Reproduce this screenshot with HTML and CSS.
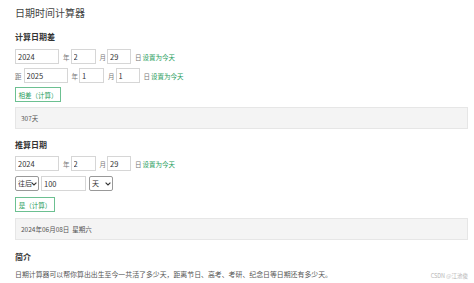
FILE: index.html
```html
<!DOCTYPE html>
<html lang="zh">
<head>
    <meta charset="UTF-8">
    <meta name="viewport" content="width=device-width, initial-scale=1.0">
    <title>日期时间计算器</title>
    <link rel="stylesheet" href="styles.css">
</head>
<body>
<div class="page">
    <h1 class="title">日期时间计算器</h1>

    <!-- 日期差 -->
    <h2 class="sec sec-first">计算日期差</h2>
    <div class="row">
        <input class="num year" type="text" value="2024">
        <span class="lbl">年</span>
        <input class="num mon" type="text" value="2">
        <span class="lbl">月</span>
        <input class="num day" type="text" value="29">
        <span class="lbl">日</span>
        <a class="today" href="#">设置为今天</a>
    </div>
    <div class="row">
        <span class="lbl lbl-start">距</span>
        <input class="num year" type="text" value="2025">
        <span class="lbl">年</span>
        <input class="num mon" type="text" value="1">
        <span class="lbl">月</span>
        <input class="num day" type="text" value="1">
        <span class="lbl">日</span>
        <a class="today" href="#">设置为今天</a>
    </div>
    <button class="calc calc-diff">相差（计算）</button>
    <div class="result">307天</div>

    <!-- 推算日期 -->
    <h2 class="sec sec-second">推算日期</h2>
    <div class="row">
        <input class="num year" type="text" value="2024">
        <span class="lbl">年</span>
        <input class="num mon" type="text" value="2">
        <span class="lbl">月</span>
        <input class="num day" type="text" value="29">
        <span class="lbl">日</span>
        <a class="today" href="#">设置为今天</a>
    </div>
    <div class="row row-shift">
        <div class="sel">
            <select><option>往后</option><option>往前</option></select>
            <svg class="chev" width="6" height="4" viewBox="0 0 6 4"><path d="M0.6 0.6 L3 3 L5.4 0.6" fill="none" stroke="#333" stroke-width="1.1"/></svg>
        </div>
        <input class="num count" type="text" value="100">
        <div class="sel">
            <select><option>天</option><option>周</option><option>月</option></select>
            <svg class="chev" width="6" height="4" viewBox="0 0 6 4"><path d="M0.6 0.6 L3 3 L5.4 0.6" fill="none" stroke="#333" stroke-width="1.1"/></svg>
        </div>
    </div>
    <button class="calc calc-go">是（计算）</button>
    <div class="result">2024年06月08日&nbsp;&nbsp;星期六</div>

    <!-- 简介 -->
    <h2 class="sec sec-intro">简介</h2>
    <p class="intro">日期计算器可以帮你算出出生至今一共活了多少天，距离节日、高考、考研、纪念日等日期还有多少天。</p>

    <span class="mark">CSDN @江池俊</span>
</div>
</body>
</html>
```

FILE: styles.css
```css
/* Grundlayout */
body {
    margin: 0;
    background: #fff;
    color: #555;
    font-family: "Noto Sans CJK SC", "Noto Sans", sans-serif;
}

.page {
    position: relative;
    padding: 7px 6px 0 15px;
    height: 276px;
}

.title {
    margin: 0;
    font-size: 10px;
    line-height: 12px;
    font-weight: normal;
    color: #444;
}

.sec {
    margin: 0 0 7px 0;
    font-size: 8px;
    line-height: 10px;
    font-weight: bold;
    color: #333;
}

.sec-first { margin-top: 13px; }
.sec-second { margin-top: 11px; margin-bottom: 6px; }
.sec-intro { margin-top: 12px; margin-bottom: 8px; }

/* Eingabezeilen */
.row {
    display: flex;
    align-items: center;
    height: 15px;
    margin-bottom: 4px;
}

.row-shift {
    margin-top: 5px;
    margin-bottom: 6px;
}

.num {
    box-sizing: border-box;
    height: 15px;
    margin: 0;
    padding: 0 0 0 2px;
    border: 1px solid #d6d6d6;
    font-family: "Noto Sans CJK SC", sans-serif;
    font-size: 7.5px;
    color: #333;
    outline: none;
}

.year { width: 44px; }
.mon { width: 25px; }
.day { width: 24px; }
.count { width: 45px; margin: 0 3px 0 2px; }

.lbl {
    font-size: 6.5px;
    color: #777;
    padding: 0 1px 0 4px;
}

.lbl-start { padding: 0 2px 0 0; }

.today {
    font-size: 6.5px;
    color: #1f9d5c;
    text-decoration: none;
}

/* Auswahlfelder */
.sel {
    position: relative;
    display: flex;
    width: 24px;
    height: 15px;
}

.sel select {
    display: block;
    box-sizing: border-box;
    width: 24px;
    height: 15px;
    margin: 0;
    padding: 0 0 0 2px;
    border: 1px solid #999;
    border-radius: 2px;
    background: #fff;
    font-family: "Noto Sans CJK SC", sans-serif;
    font-size: 7px;
    line-height: 13px;
    color: #333;
    appearance: none;
    -webkit-appearance: none;
}

.chev {
    position: absolute;
    right: 2px;
    top: 6px;
    pointer-events: none;
}

/* Buttons */
.calc {
    display: block;
    box-sizing: border-box;
    height: 15px;
    margin: 0 0 5px 0;
    padding: 0;
    background: #fff;
    border: 1px solid #6cc091;
    font-family: "Noto Sans CJK SC", sans-serif;
    font-size: 6.5px;
    color: #1f9d5c;
    cursor: pointer;
}

.calc-diff { width: 46px; margin-top: 1px; }
.calc-go { width: 40px; margin-bottom: 6px; }

/* Ergebnis */
.result {
    box-sizing: border-box;
    height: 22px;
    padding-left: 5px;
    background: #f4f4f4;
    border: 1px solid #e6e6e6;
    font-size: 6.5px;
    line-height: 20px;
    color: #555;
}

.intro {
    margin: 0;
    font-size: 6.9px;
    line-height: 9px;
    color: #555;
}

/* Wasserzeichen */
.mark {
    position: absolute;
    right: 6px;
    top: 272px;
    font-size: 5.5px;
    color: #b5b5b5;
}
```
